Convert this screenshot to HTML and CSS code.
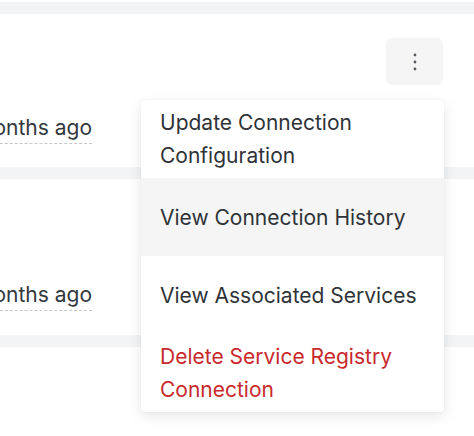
FILE: index.html
```html
<!DOCTYPE html>
<html>
<head>
<meta charset="utf-8">
<link rel="stylesheet" href="styles.css">
</head>
<body>
<div class="page">
  <div class="list">
    <div class="card card-tail"></div>
    <div class="card">
      <div class="card-head">
        <button class="kebab" aria-label="More actions">
          <svg width="6" height="20" viewBox="0 0 6 20"><circle cx="3" cy="3" r="1.4"/><circle cx="3" cy="10" r="1.4"/><circle cx="3" cy="17" r="1.4"/></svg>
        </button>
      </div>
      <div class="date-cell"><span class="date">months ago</span></div>
    </div>
    <div class="card card-second">
      <div class="card-head">
        <button class="kebab" aria-label="More actions">
          <svg width="6" height="20" viewBox="0 0 6 20"><circle cx="3" cy="3" r="1.4"/><circle cx="3" cy="10" r="1.4"/><circle cx="3" cy="17" r="1.4"/></svg>
        </button>
      </div>
      <div class="date-cell"><span class="date">months ago</span></div>
    </div>
    <div class="card card-rest"></div>
  </div>
  <ul class="menu">
    <li class="menu-item">Update Connection Configuration</li>
    <li class="menu-item is-hover">View Connection History</li>
    <li class="menu-item">View Associated Services</li>
    <li class="menu-item danger">Delete Service Registry Connection</li>
  </ul>
</div>
</body>
</html>
```

FILE: styles.css
```css
html, body {
  margin: 0;
  padding: 0;
  width: 474px;
  height: 436px;
  overflow: hidden;
  background: #ffffff;
  font-family: "Inter", "Noto Sans", sans-serif;
}

.page {
  position: relative;
  width: 474px;
  height: 436px;
}

.list {
  display: flex;
  flex-direction: column;
  gap: 12px;
  background: #f3f4f6;
  height: 436px;
}

.card {
  background: #ffffff;
  display: flex;
  flex-direction: column;
  height: 153px;
  padding: 24px 31px 0 0;
  box-sizing: border-box;
}

.card-tail {
  height: 2px;
  padding: 0;
}

.card-second {
  height: 156px;
  padding-top: 26px;
}

.card-rest {
  flex: 1;
  padding: 0;
}

.card-head {
  display: flex;
  justify-content: flex-end;
}

.kebab {
  width: 57px;
  height: 47px;
  border: none;
  border-radius: 6px;
  background: #f5f5f5;
  display: flex;
  align-items: center;
  justify-content: center;
  padding: 0;
  margin: 0;
}

.kebab svg {
  fill: #555a60;
}

.date-cell {
  display: flex;
  justify-content: flex-end;
  width: 92px;
  margin-top: 29px;
}

.date {
  white-space: nowrap;
  font-size: 21px;
  line-height: 28px;
  color: #33383d;
  padding-bottom: 1px;
  border-bottom: 1px dashed #c4c7cb;
}

.menu {
  position: absolute;
  left: 141px;
  top: 100px;
  width: 303px;
  margin: 0;
  padding: 0;
  list-style: none;
  background: #ffffff;
  border-radius: 4px;
  box-shadow: 0 4px 14px rgba(0, 0, 0, 0.10), 0 0 2px rgba(0, 0, 0, 0.05);
  overflow: hidden;
}

.menu-item {
  height: 78px;
  display: flex;
  align-items: center;
  padding: 0 8px 0 19px;
  font-size: 21px;
  line-height: 33px;
  color: #2f3338;
}

.menu-item.is-hover {
  background: #f5f5f5;
}

.menu-item.danger {
  color: #c9282d;
}
```
